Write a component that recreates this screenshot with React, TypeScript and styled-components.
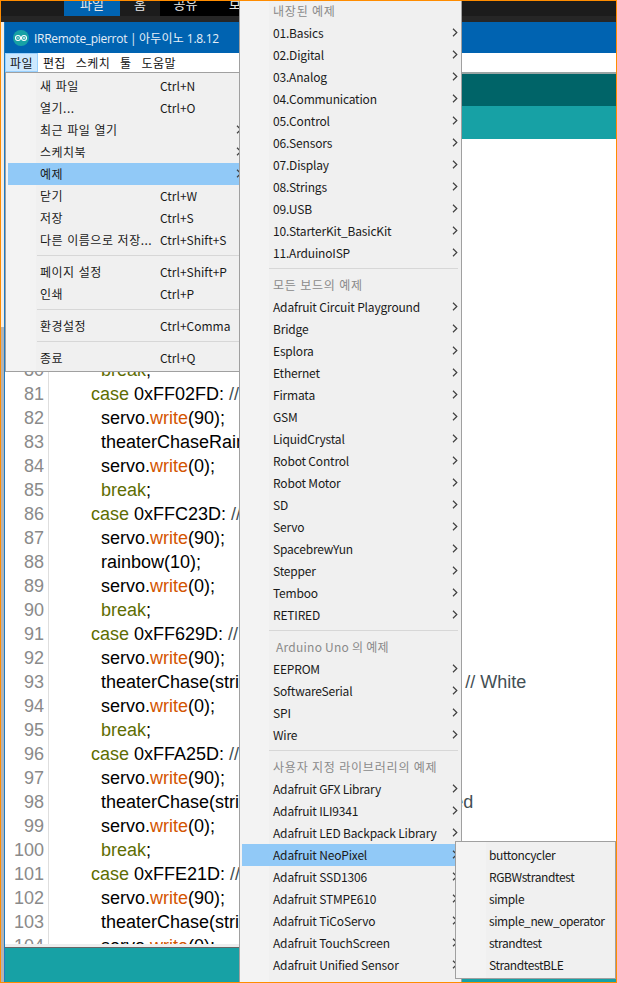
import styled, { createGlobalStyle } from 'styled-components';

const GlobalStyle = createGlobalStyle`
    html, body {
        margin: 0;
        padding: 0;
        background: #ffffff;
    }
    body {
        font-family: "Noto Sans CJK KR", "Noto Sans", sans-serif;
        font-size: 12px;
    }
`;

type Token = { text: string; kind?: 'kw' | 'fn' | 'note' };
type Entry = { label: string; shortcut?: string; arrow?: boolean; active?: boolean; header?: boolean; shift?: boolean; sep?: boolean };

const kw = (text: string): Token => ({ text, kind: 'kw' });
const fn = (text: string): Token => ({ text, kind: 'fn' });
const note = (text: string): Token => ({ text, kind: 'note' });

const servoWrite = (n: number): Token[] => [{ text: 'servo.' }, fn('write'), { text: `(${n});` }];
const caseLine = (code: string): Token[] => [kw('case'), { text: ` ${code}: ` }, note('// x')];
const breakLine: Token[] = [kw('break'), { text: ';' }];

const codeLines: { tokens: Token[]; isCase?: boolean }[] = [
    { tokens: caseLine('0xFF6897'), isCase: true },
    { tokens: servoWrite(90) },
    { tokens: [{ text: 'colorWipe(0);' }] },
    { tokens: servoWrite(0) },
    { tokens: breakLine },
    { tokens: caseLine('0xFF22DD'), isCase: true },
    { tokens: servoWrite(90) },
    { tokens: [{ text: 'rainbowCycle(10);' }] },
    { tokens: servoWrite(0) },
    { tokens: breakLine },
    { tokens: caseLine('0xFF02FD'), isCase: true },
    { tokens: servoWrite(90) },
    { tokens: [{ text: 'theaterChaseRainbow(50);' }] },
    { tokens: servoWrite(0) },
    { tokens: breakLine },
    { tokens: caseLine('0xFFC23D'), isCase: true },
    { tokens: servoWrite(90) },
    { tokens: [{ text: 'rainbow(10);' }] },
    { tokens: servoWrite(0) },
    { tokens: breakLine },
    { tokens: caseLine('0xFF629D'), isCase: true },
    { tokens: servoWrite(90) },
    { tokens: [{ text: 'theaterChase(strip.Color(127, 127, 127), 50); ' }, note('// White')] },
    { tokens: servoWrite(0) },
    { tokens: breakLine },
    { tokens: caseLine('0xFFA25D'), isCase: true },
    { tokens: servoWrite(90) },
    { tokens: [{ text: 'theaterChase(strip.Color(127, 0, 0), 50); ' }, note('// Red')] },
    { tokens: servoWrite(0) },
    { tokens: breakLine },
    { tokens: caseLine('0xFFE21D'), isCase: true },
    { tokens: servoWrite(90) },
    { tokens: [{ text: 'theaterChase(strip.Color(0, 0, 127), 50);' }] },
    { tokens: servoWrite(0) },
];

const fileMenu: Entry[] = [
    { label: '새 파일', shortcut: 'Ctrl+N' },
    { label: '열기...', shortcut: 'Ctrl+O' },
    { label: '최근 파일 열기', arrow: true },
    { label: '스케치북', arrow: true },
    { label: '예제', arrow: true, active: true },
    { label: '닫기', shortcut: 'Ctrl+W' },
    { label: '저장', shortcut: 'Ctrl+S' },
    { label: '다른 이름으로 저장...', shortcut: 'Ctrl+Shift+S' },
    { label: '', sep: true },
    { label: '페이지 설정', shortcut: 'Ctrl+Shift+P' },
    { label: '인쇄', shortcut: 'Ctrl+P' },
    { label: '', sep: true },
    { label: '환경설정', shortcut: 'Ctrl+Comma' },
    { label: '', sep: true },
    { label: '종료', shortcut: 'Ctrl+Q' },
];

const arrowed = (labels: string[]): Entry[] => labels.map(label => ({ label, arrow: true }));

const exampleMenu: Entry[] = [
    { label: '내장된 예제', header: true },
    ...arrowed(['01.Basics', '02.Digital', '03.Analog', '04.Communication', '05.Control', '06.Sensors', '07.Display', '08.Strings', '09.USB', '10.StarterKit_BasicKit', '11.ArduinoISP']),
    { label: '', sep: true },
    { label: '모든 보드의 예제', header: true },
    ...arrowed(['Adafruit Circuit Playground', 'Bridge', 'Esplora', 'Ethernet', 'Firmata', 'GSM', 'LiquidCrystal', 'Robot Control', 'Robot Motor', 'SD', 'Servo', 'SpacebrewYun', 'Stepper', 'Temboo', 'RETIRED']),
    { label: '', sep: true },
    { label: 'Arduino Uno 의 예제', header: true, shift: true },
    ...arrowed(['EEPROM', 'SoftwareSerial', 'SPI', 'Wire']),
    { label: '', sep: true },
    { label: '사용자 지정 라이브러리의 예제', header: true },
    ...arrowed(['Adafruit GFX Library', 'Adafruit ILI9341', 'Adafruit LED Backpack Library']),
    { label: 'Adafruit NeoPixel', arrow: true, active: true },
    ...arrowed(['Adafruit SSD1306', 'Adafruit STMPE610', 'Adafruit TiCoServo', 'Adafruit TouchScreen', 'Adafruit Unified Sensor']),
];

const neoPixelMenu = ['buttoncycler', 'RGBWstrandtest', 'simple', 'simple_new_operator', 'strandtest', 'StrandtestBLE'];

function ArrowMark() {
    return (
        <ArrowSvg width="6" height="9" viewBox="0 0 6 9">
            <path d="M1 0.8 L4.8 4.5 L1 8.2" fill="none" stroke="#404040" strokeWidth="1.2" />
        </ArrowSvg>
    );
}

function ArduinoLogo() {
    return (
        <svg width="16" height="16" viewBox="0 0 16 16">
            <circle cx="8" cy="8" r="8" fill="#17A1A5" />
            <circle cx="5" cy="8" r="2.5" fill="none" stroke="#ffffff" strokeWidth="1.1" />
            <circle cx="11" cy="8" r="2.5" fill="none" stroke="#ffffff" strokeWidth="1.1" />
            <path d="M3.9 8 H6.1 M9.9 8 H12.1 M11 6.9 V9.1" stroke="#ffffff" strokeWidth="0.8" />
        </svg>
    );
}

export default function App() {
    return (
        <>
            <GlobalStyle />
            <Frame>
                <Ribbon>
                    <RibbonTab $active>파일</RibbonTab>
                    <RibbonTab>홈</RibbonTab>
                    <RibbonTab $black>공유</RibbonTab>
                    <RibbonTab $black $narrow>보</RibbonTab>
                </Ribbon>
                <Body>
                    <BackStrip>
                        <StripLight />
                        <StripGray />
                    </BackStrip>
                    <Window>
                        <TitleBar>
                            <ArduinoLogo />
                            <TitleText>IRRemote_pierrot | <TitleKorean>아두이노</TitleKorean> 1.8.12</TitleText>
                        </TitleBar>
                        <MenuBar>
                            <MenuBarItem $active>파일</MenuBarItem>
                            <MenuBarItem>편집</MenuBarItem>
                            <MenuBarItem>스케치</MenuBarItem>
                            <MenuBarItem>툴</MenuBarItem>
                            <MenuBarItem>도움말</MenuBarItem>
                        </MenuBar>
                        <ToolbarDark />
                        <TabStrip />
                        <Editor>
                            {codeLines.map((line, i) => (
                                <CodeRow key={i}>
                                    <LineNumber>{71 + i}</LineNumber>
                                    <CodeText $isCase={line.isCase}>
                                        {line.tokens.map((t, j) => (
                                            <Tok key={j} $kind={t.kind}>{t.text}</Tok>
                                        ))}
                                    </CodeText>
                                </CodeRow>
                            ))}
                        </Editor>
                        <EditorEnd />
                        <Footer />
                    </Window>
                </Body>

                <FileMenu>
                    {fileMenu.map((item, i) =>
                        item.sep ? (
                            <FileSep key={i} />
                        ) : (
                            <FileRow key={i} $active={item.active}>
                                <FileLabel>{item.label}</FileLabel>
                                <span>{item.shortcut}</span>
                                {item.arrow && <ArrowMark />}
                            </FileRow>
                        )
                    )}
                </FileMenu>

                <ExampleMenu>
                    {exampleMenu.map((item, i) =>
                        item.sep ? (
                            <ExampleSep key={i} />
                        ) : (
                            <ExampleRow key={i} $active={item.active} $header={item.header} $shift={item.shift}>
                                <span>{item.label}</span>
                                {item.arrow && <ArrowMark />}
                            </ExampleRow>
                        )
                    )}
                </ExampleMenu>

                <SubMenu>
                    {neoPixelMenu.map(name => (
                        <SubRow key={name}>{name}</SubRow>
                    ))}
                </SubMenu>
            </Frame>
        </>
    );
}

const Frame = styled.div`
    position: relative;
    box-sizing: border-box;
    width: 617px;
    height: 983px;
    border: 1px solid #ff8c00;
    overflow: hidden;
    display: flex;
    flex-direction: column;
    background: #ffffff;
`;

const Ribbon = styled.div`
    height: 21px;
    flex: none;
    display: flex;
    align-items: flex-start;
    padding-left: 63px;
    background: linear-gradient(to bottom, #1c1c1c 15px, #262626 15px);
`;

const RibbonTab = styled.div<{ $active?: boolean; $black?: boolean; $narrow?: boolean }>`
    box-sizing: border-box;
    width: ${p => (p.$active ? '56px' : p.$narrow ? '60px' : p.$black ? '67px' : '40px')};
    height: 15px;
    padding: ${p => (p.$narrow ? '0 0 0 2px' : p.$black ? '0 16px 0 0' : '0')};
    line-height: 6px;
    text-align: ${p => (p.$narrow ? 'left' : 'center')};
    font-size: 13px;
    color: #e8e8e8;
    overflow: hidden;
    background: ${p => (p.$active ? '#0063b1' : p.$black ? '#000000' : '#1c1c1c')};
`;

const Body = styled.div`
    flex: 1;
    min-height: 0;
    display: flex;
`;

const BackStrip = styled.div`
    width: 3px;
    flex: none;
    display: flex;
    flex-direction: column;
`;

const StripLight = styled.div`
    height: 305px;
    background: #f3ede4;
`;

const StripGray = styled.div`
    flex: 1;
    background: #b3b3b3;
`;

const Window = styled.div`
    flex: 1;
    min-width: 0;
    display: flex;
    flex-direction: column;
    border-left: 1px solid #1b7ac4;
`;

const TitleBar = styled.div`
    height: 31px;
    flex: none;
    display: flex;
    align-items: center;
    gap: 5px;
    padding-left: 8px;
    background: #0063b1;
`;

const TitleText = styled.div`
    font-family: "Open Sans", "Noto Sans CJK KR", sans-serif;
    font-size: 12px;
    letter-spacing: -0.3px;
    color: #e6eff7;
`;

const TitleKorean = styled.span`
    letter-spacing: 0.2px;
`;

const MenuBar = styled.div`
    height: 19px;
    flex: none;
    display: flex;
    background: #ffffff;
    border-bottom: 2px solid #9aa5a5;
`;

const MenuBarItem = styled.div<{ $active?: boolean }>`
    box-sizing: border-box;
    height: 19px;
    line-height: 17px;
    padding: 0 4px;
    letter-spacing: 0.4px;
    color: #111111;
    background: ${p => (p.$active ? '#cce8ff' : 'transparent')};
    border: 1px solid ${p => (p.$active ? '#99d1ff' : 'transparent')};
`;

const ToolbarDark = styled.div`
    height: 32px;
    flex: none;
    background: #006468;
`;

const TabStrip = styled.div`
    height: 33px;
    flex: none;
    background: #17a1a5;
`;

const Editor = styled.div`
    flex: 1;
    min-height: 0;
    overflow: hidden;
    padding-top: 3px;
    background: linear-gradient(to right, #ffffff 43px, #dedede 43px, #dedede 44px, #ffffff 44px);
`;

const CodeRow = styled.div`
    display: flex;
    height: 24px;
    line-height: 24px;
    font-family: "Liberation Sans", Arial, sans-serif;
    font-size: 18px;
    white-space: nowrap;
`;

const LineNumber = styled.div`
    width: 39px;
    flex: none;
    text-align: right;
    color: #8a8a8a;
`;

const CodeText = styled.div<{ $isCase?: boolean }>`
    padding-left: ${p => (p.$isCase ? '47px' : '57px')};
    color: #000000;
`;

const Tok = styled.span<{ $kind?: 'kw' | 'fn' | 'note' }>`
    color: ${p => (p.$kind === 'kw' ? '#5e6d03' : p.$kind === 'fn' ? '#d35400' : p.$kind === 'note' ? '#434f54' : 'inherit')};
`;

const EditorEnd = styled.div`
    height: 4px;
    flex: none;
    background: #eeeeee;
    border-bottom: 1px solid #666666;
    box-sizing: border-box;
`;

const Footer = styled.div`
    height: 34px;
    flex: none;
    background: #17a1a5;
`;

const ArrowSvg = styled.svg`
    position: absolute;
    top: 6px;
    right: 3px;
`;

const FileMenu = styled.div`
    position: absolute;
    top: 71px;
    left: 4px;
    box-sizing: border-box;
    width: 236px;
    height: 300px;
    padding: 2px 0 0 2px;
    background: linear-gradient(to right, #f3f3f3 30px, #f0f0f0 30px);
    border: 1px solid #a0a0a0;
`;

const FileRow = styled.div<{ $active?: boolean }>`
    position: relative;
    display: grid;
    grid-template-columns: 120px 1fr;
    height: 22px;
    line-height: 22px;
    padding-left: 32px;
    color: #1a1a1a;
    white-space: nowrap;
    background: ${p => (p.$active ? '#91c9f7' : 'transparent')};

    svg {
        right: -2px;
    }
`;

const FileLabel = styled.span`
    letter-spacing: 0.5px;
    word-spacing: 1px;
`;

const FileSep = styled.div`
    height: 10px;
    margin-left: 29px;
    background: linear-gradient(to bottom, transparent 4px, #d7d7d7 4px, #d7d7d7 5px, transparent 5px);
`;

const ExampleMenu = styled.div`
    position: absolute;
    top: -1px;
    left: 238px;
    bottom: 0;
    box-sizing: border-box;
    width: 223px;
    padding-left: 2px;
    background: linear-gradient(to right, #f3f3f3 29px, #f0f0f0 29px);
    border-left: 1px solid #a0a0a0;
    border-right: 1px solid #a0a0a0;
`;

const ExampleRow = styled.div<{ $active?: boolean; $header?: boolean; $shift?: boolean }>`
    position: relative;
    height: 22px;
    line-height: 22px;
    padding-left: ${p => (p.$shift ? '34px' : '31px')};
    white-space: nowrap;
    letter-spacing: ${p => (p.$shift ? '0.25px' : p.$header ? '0.8px' : '-0.18px')};
    color: ${p => (p.$header ? '#8a8a8a' : '#1a1a1a')};
    background: ${p => (p.$active ? '#91c9f7' : 'transparent')};
`;

const ExampleSep = styled.div`
    height: 10px;
    margin: 0 3px 0 27px;
    background: linear-gradient(to bottom, transparent 4px, #d7d7d7 4px, #d7d7d7 5px, transparent 5px);
`;

const SubMenu = styled.div`
    position: absolute;
    top: 840px;
    left: 454px;
    box-sizing: border-box;
    width: 161px;
    padding: 2px;
    background: linear-gradient(to right, #f3f3f3 30px, #f0f0f0 30px);
    border: 1px solid #a0a0a0;
`;

const SubRow = styled.div`
    height: 22px;
    line-height: 22px;
    padding-left: 31px;
    letter-spacing: -0.4px;
    color: #1a1a1a;
    white-space: nowrap;
`;
